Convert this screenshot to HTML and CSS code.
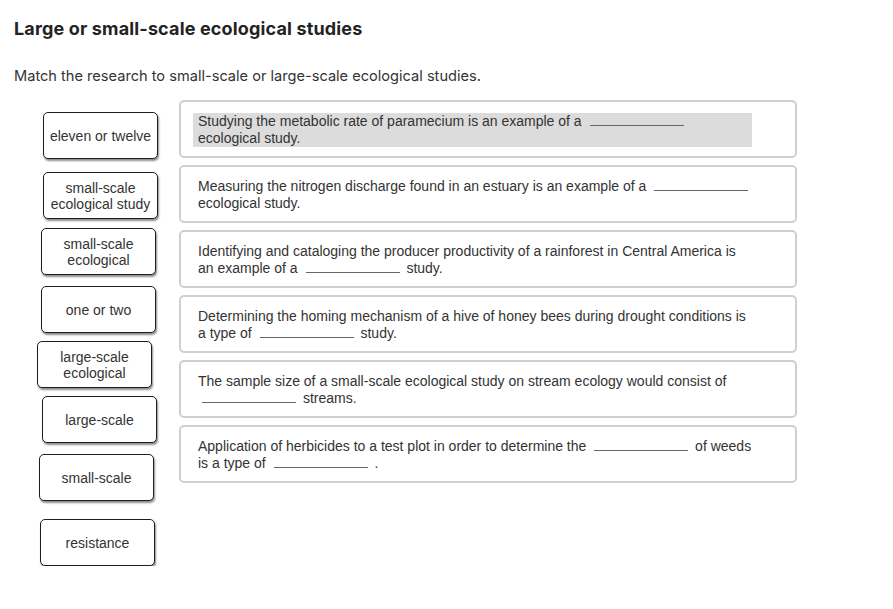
FILE: index.html
```html
<!DOCTYPE html>
<html lang="en">
<head>
<meta charset="utf-8">
<title>Large or small-scale ecological studies</title>
<link rel="stylesheet" href="styles.css">
</head>
<body>
<main class="page">
  <h1 class="title">Large or small-scale ecological studies</h1>
  <p class="prompt">Match the research to small-scale or large-scale ecological studies.</p>

  <div class="matching">
    <div class="pool">
      <div class="chip c1">eleven or twelve</div>
      <div class="chip c2">small-scale<br>ecological study</div>
      <div class="chip c3">small-scale<br>ecological</div>
      <div class="chip c4">one or two</div>
      <div class="chip c5">large-scale<br>ecological</div>
      <div class="chip c6">large-scale</div>
      <div class="chip c7">small-scale</div>
      <div class="chip c8">resistance</div>
    </div>

    <div class="targets">
      <div class="card">
        <div class="stem is-active">Studying the metabolic rate of paramecium is an example of a <span class="blank"></span><br>ecological study.</div>
      </div>
      <div class="card">
        <div class="stem">Measuring the nitrogen discharge found in an estuary is an example of a <span class="blank"></span><br>ecological study.</div>
      </div>
      <div class="card">
        <div class="stem">Identifying and cataloging the producer productivity of a rainforest in Central America is<br>an example of a <span class="blank"></span> study.</div>
      </div>
      <div class="card">
        <div class="stem">Determining the homing mechanism of a hive of honey bees during drought conditions is<br>a type of <span class="blank"></span> study.</div>
      </div>
      <div class="card">
        <div class="stem">The sample size of a small-scale ecological study on stream ecology would consist of<br><span class="blank"></span> streams.</div>
      </div>
      <div class="card">
        <div class="stem">Application of herbicides to a test plot in order to determine the <span class="blank"></span> of weeds<br>is a type of <span class="blank"></span> .</div>
      </div>
    </div>
  </div>
</main>
</body>
</html>
```

FILE: styles.css
```css
* {
  box-sizing: border-box;
}

body {
  margin: 0;
  background: #fff;
  color: #2d2d2d;
}

.page {
  padding: 17px 0 0 14px;
}

.title {
  margin: 0;
  font-family: Inter, Lato, sans-serif;
  font-weight: 700;
  font-size: 18px;
  letter-spacing: 0.15px;
  line-height: 24px;
  color: #232323;
}

.prompt {
  margin: 25px 0 0;
  font-family: Inter, Lato, sans-serif;
  font-size: 14.6px;
  line-height: 20px;
  color: #333;
}

.matching {
  display: flex;
  margin-top: 14px;
  margin-left: -14px;
}

/* pool of draggable answer chips */
.pool {
  width: 179px;
  display: flex;
  flex-direction: column;
  align-items: flex-start;
}

.chip {
  width: 115px;
  height: 47px;
  display: flex;
  align-items: center;
  justify-content: center;
  text-align: center;
  border: 1px solid #1e1e1e;
  border-radius: 5px;
  background: #fff;
  box-shadow: 1px 2px 2px rgba(0, 0, 0, 0.45);
  font-family: "Liberation Sans", Arial, sans-serif;
  font-size: 14px;
  line-height: 16px;
  color: #333;
  padding-top: 1px;
}

.c1 { margin: 12px 0 0 43px; }
.c2 { margin: 13px 0 0 43px; }
.c3 { margin: 9px 0 0 41px; }
.c4 { margin: 11px 0 0 41px; }
.c5 { margin: 8px 0 0 37px; }
.c6 { margin: 8px 0 0 42px; }
.c7 { margin: 11px 0 0 39px; }
.c8 { margin: 18px 0 0 40px; }

/* drop target rows */
.targets {
  width: 618px;
  display: flex;
  flex-direction: column;
  gap: 7px;
}

.card {
  height: 58px;
  border: 2px solid #cfcfcf;
  border-radius: 5px;
  padding: 11px 12px 9px;
}

.stem {
  width: 559px;
  padding-left: 5px;
  white-space: nowrap;
  font-family: "Liberation Sans", Arial, sans-serif;
  font-size: 14px;
  line-height: 17px;
  color: #333;
}

.stem.is-active {
  background: #dcdcdc;
}

.blank {
  display: inline-block;
  width: 94px;
  margin: 0 3px 0 4px;
  border-bottom: 1px solid #666;
  vertical-align: baseline;
}
```
